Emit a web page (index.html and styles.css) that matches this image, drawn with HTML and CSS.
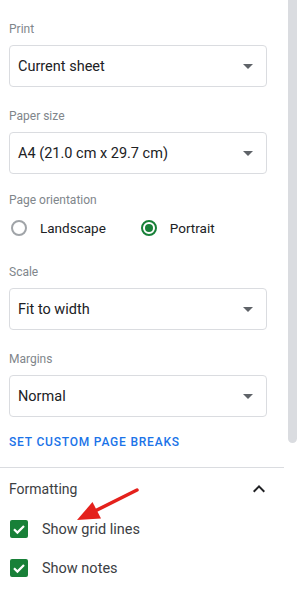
FILE: index.html
```html
<!DOCTYPE html>
<html>
<head>
<meta charset="utf-8">
<link rel="stylesheet" href="styles.css">
</head>
<body>
<div class="panel">
  <section class="settings">
    <div class="field field--first">
      <div class="label">Print</div>
      <div class="select"><span>Current sheet</span><span class="caret"></span></div>
    </div>
    <div class="field field--paper">
      <div class="label">Paper size</div>
      <div class="select"><span>A4 (21.0 cm x 29.7 cm)</span><span class="caret"></span></div>
    </div>
    <div class="field field--orient">
      <div class="label">Page orientation</div>
      <div class="radios">
        <div class="radio-opt"><span class="radio"></span><span>Landscape</span></div>
        <div class="radio-opt"><span class="radio radio--on"></span><span>Portrait</span></div>
      </div>
    </div>
    <div class="field field--scale">
      <div class="label">Scale</div>
      <div class="select"><span>Fit to width</span><span class="caret"></span></div>
    </div>
    <div class="field field--margins">
      <div class="label">Margins</div>
      <div class="select"><span>Normal</span><span class="caret"></span></div>
    </div>
    <div class="link">SET CUSTOM PAGE BREAKS</div>
  </section>
  <div class="divider"></div>
  <section class="formatting">
    <div class="fmt-head">
      <span>Formatting</span>
      <svg class="chevron" width="24" height="24" viewBox="0 0 24 24"><path d="M12 8l-6 6 1.41 1.41L12 10.83l4.59 4.58L18 14z" fill="#202124"/></svg>
    </div>
    <div class="check-row check-row--first">
      <span class="checkbox"><svg width="18" height="18" viewBox="0 0 18 18"><polyline points="4,9.3 7.4,12.6 14,6" fill="none" stroke="#fff" stroke-width="2.2"/></svg></span>
      <span>Show grid lines</span>
    </div>
    <div class="check-row">
      <span class="checkbox"><svg width="18" height="18" viewBox="0 0 18 18"><polyline points="4,9.3 7.4,12.6 14,6" fill="none" stroke="#fff" stroke-width="2.2"/></svg></span>
      <span>Show notes</span>
    </div>
  </section>
</div>
<div class="scrollbar"></div>
<svg class="annotation" width="300" height="593" viewBox="0 0 300 593">
  <line x1="137" y1="490" x2="93" y2="512" stroke="#e4211c" stroke-width="3.5" stroke-linecap="round"/>
  <polygon points="77,520 92.5,502 101,518.5" fill="#e4211c"/>
</svg>
</body>
</html>
```

FILE: styles.css
```css
html, body {
  margin: 0;
  padding: 0;
  background: #ffffff;
}
body {
  width: 300px;
  height: 593px;
  overflow: hidden;
  position: relative;
  font-family: Roboto, "Noto Sans", Arial, sans-serif;
  color: #202124;
}
.panel {
  width: 284px;
}
.settings {
  padding: 21px 9px 0 9px;
}
.field--paper { margin-top: 21px; }
.field--orient { margin-top: 18px; }
.field--scale { margin-top: 24px; }
.field--margins { margin-top: 21px; }
.label {
  font-size: 12px;
  line-height: 16px;
  height: 16px;
  color: #80868b;
  margin-bottom: 8px;
}
.select {
  box-sizing: border-box;
  width: 258px;
  height: 42px;
  border: 1px solid #dadce0;
  border-radius: 4px;
  display: flex;
  align-items: center;
  justify-content: space-between;
  padding: 0 13px 0 8px;
  font-size: 14.5px;
  color: #202124;
}
.caret {
  width: 0;
  height: 0;
  border-left: 5px solid transparent;
  border-right: 5px solid transparent;
  border-top: 5px solid #5f6368;
}
.radios {
  display: flex;
  align-items: center;
  height: 24px;
  padding-left: 2px;
  font-size: 13.5px;
  color: #202124;
}
.radio-opt {
  display: flex;
  align-items: center;
  gap: 13px;
}
.radio-opt + .radio-opt {
  margin-left: 35px;
}
.radio {
  box-sizing: border-box;
  width: 16px;
  height: 16px;
  border-radius: 50%;
  border: 2px solid #a0a4a8;
  display: flex;
  align-items: center;
  justify-content: center;
}
.radio--on {
  border-color: #188038;
}
.radio--on::after {
  content: "";
  width: 8px;
  height: 8px;
  border-radius: 50%;
  background: #188038;
}
.link {
  margin-top: 15px;
  font-size: 12px;
  line-height: 20px;
  font-weight: 500;
  letter-spacing: 0.8px;
  color: #1a73e8;
}
.divider {
  margin-top: 15px;
  height: 1px;
  background: #dadce0;
}
.formatting {
  padding: 11px 9px 0 9px;
}
.fmt-head {
  display: flex;
  justify-content: space-between;
  align-items: center;
  height: 20px;
  font-size: 14px;
  color: #3c4043;
}
.chevron {
  margin-right: 4px;
}
.check-row {
  display: flex;
  align-items: center;
  gap: 14px;
  height: 24px;
  margin-top: 15px;
  padding-left: 1px;
  font-size: 14.5px;
  color: #3c4043;
}
.check-row--first {
  margin-top: 18px;
}
.checkbox {
  width: 18px;
  height: 18px;
  border-radius: 2px;
  background: #188038;
  display: flex;
}
.scrollbar {
  position: absolute;
  left: 288px;
  top: 0;
  width: 9px;
  height: 443px;
  background: #dadce0;
  border-radius: 0 0 5px 5px;
}
.annotation {
  position: absolute;
  left: 0;
  top: 0;
  pointer-events: none;
}
```
